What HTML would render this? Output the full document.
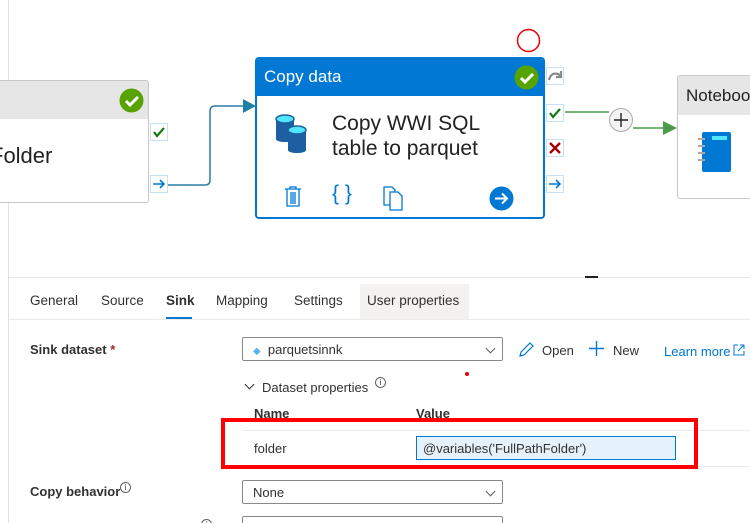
<!DOCTYPE html>
<html><head><style>
*{margin:0;padding:0;box-sizing:border-box}
html,body{width:750px;height:523px;overflow:hidden}
body{background:#fff;font-family:"Liberation Sans",sans-serif;position:relative;color:#323130}
.a{position:absolute}
.sb{position:absolute;width:18px;height:18px;border:1px solid #c7e0f4;background:#fff}
.dd{position:absolute;border:1px solid #8a8886;border-radius:2px;height:24px;font-size:13px;padding:4px 0 0 10px}
.chev{position:absolute;right:8px;top:7px;width:7px;height:7px;border-right:1px solid #605e5c;border-bottom:1px solid #605e5c;transform:rotate(45deg)}
.lbl{position:absolute;font-size:13px;color:#323130;white-space:nowrap}
.info{position:absolute;width:11px;height:11px;border:1px solid #605e5c;border-radius:50%;font-size:8px;text-align:center;line-height:9px}
</style></head><body>
<div class="a" style="left:8px;top:0;width:1px;height:523px;background:#e1e1e1"></div>
<div class="a" style="left:9px;top:277px;width:741px;height:1px;background:#e8e8e8"></div>
<div class="a" style="left:585px;top:276px;width:13px;height:2px;background:#222"></div>

<div class="a" style="left:0;top:80px;width:149px;height:123px;border:1px solid #c8c8c8;border-left:none;border-radius:0 3px 3px 0;background:#fff;overflow:hidden">
 <div style="height:38px;background:#e6e6e6"></div>
 <div class="a" style="left:-10px;top:62px;font-size:22px;color:#222">Folder</div>
</div>
<svg class="a" style="left:119px;top:88px" width="25" height="25"><circle cx="12.5" cy="12.5" r="12" fill="#57a300"/><path d="M7 13l4 4 8-8" stroke="#fff" stroke-width="3" fill="none"/></svg>
<div class="sb" style="left:150px;top:123px"><svg width="16" height="16"><path d="M3 8l3 4 7-8" stroke="#107c10" stroke-width="2.2" fill="none"/></svg></div>
<div class="sb" style="left:150px;top:175px"><svg width="16" height="16"><path d="M2 8h11M9 4l4 4-4 4" stroke="#0078d4" stroke-width="1.6" fill="none"/></svg></div>
<svg class="a" style="left:168px;top:95px" width="90" height="100"><path d="M0 90H37q5 0 5-5V16q0-5 5-5H78" stroke="#2a7ea6" stroke-width="1.5" fill="none"/><path d="M75 4l13 7-13 7z" fill="#1f7fa5"/></svg>

<div class="a" style="left:255px;top:57px;width:290px;height:162px;border:2px solid #0078d4;border-radius:4px;background:#fff;overflow:hidden">
 <div style="height:37px;background:#0078d4;color:#fff;font-size:17px;padding:8px 0 0 7px">Copy data</div>
 <div class="a" style="left:75px;top:52px;font-size:21px;color:#222;line-height:25px">Copy WWI SQL<br>table to parquet</div>
</div>
<svg class="a" style="left:514px;top:65px" width="25" height="25"><circle cx="12.5" cy="12.5" r="12" fill="#57a300"/><path d="M7 13l4 4 8-8" stroke="#fff" stroke-width="3" fill="none"/></svg>
<svg class="a" style="left:275px;top:113px" width="40" height="44"><path d="M1 6v20c0 4 18 4 18 0V6z" fill="#1d5fa0"/><ellipse cx="10" cy="6" rx="9" ry="4" fill="#50e6ff" stroke="#1d5fa0" stroke-width="1.5"/><path d="M13 17v20c0 4 18 4 18 0V17z" fill="#1d5fa0"/><ellipse cx="22" cy="17" rx="9" ry="4" fill="#50e6ff" stroke="#1d5fa0" stroke-width="1.5"/></svg>
<svg class="a" style="left:283px;top:185px" width="20" height="24"><path d="M2 4h16M7 4V2h6v2M4 4v17h12V4M8 7v12M10 7v12M12 7v12" stroke="#0078d4" stroke-width="1.3" fill="none"/></svg>
<div class="a" style="left:332px;top:182px;font-size:21px;color:#0078d4">{ }</div>
<svg class="a" style="left:383px;top:185px" width="24" height="26"><path d="M1 2h8l3 3v15H1z" stroke="#0078d4" stroke-width="1.3" fill="#fff"/><path d="M7 7h8l4 4v14H7z" stroke="#0078d4" stroke-width="1.3" fill="#fff"/></svg>
<svg class="a" style="left:489px;top:186px" width="25" height="25"><circle cx="12.5" cy="12.5" r="12" fill="#0078d4"/><path d="M6 12.5h12M13 7.5l5 5-5 5" stroke="#fff" stroke-width="2" fill="none"/></svg>
<svg class="a" style="left:516px;top:28px" width="25" height="25"><circle cx="12.5" cy="12.5" r="11" stroke="#e00" stroke-width="1.5" fill="none"/></svg>
<div class="sb" style="left:546px;top:67px"><svg width="16" height="16"><path d="M2 12q2-8 9-6l3 2M14 3v6H9" stroke="#888" stroke-width="2.2" fill="none"/></svg></div>
<div class="sb" style="left:546px;top:104px"><svg width="16" height="16"><path d="M3 8l3 4 7-8" stroke="#107c10" stroke-width="2.2" fill="none"/></svg></div>
<div class="sb" style="left:546px;top:139px"><svg width="16" height="16"><path d="M3 3l10 10M13 3L3 13" stroke="#a80000" stroke-width="2.4" fill="none"/></svg></div>
<div class="sb" style="left:546px;top:175px"><svg width="16" height="16"><path d="M2 8h11M9 4l4 4-4 4" stroke="#0078d4" stroke-width="1.6" fill="none"/></svg></div>
<svg class="a" style="left:564px;top:100px" width="115" height="40"><path d="M1 12H45M69 28H100" stroke="#4a9a4a" stroke-width="1.5"/><path d="M99 21l14 7-14 7z" fill="#4a9a4a"/><circle cx="57" cy="20" r="11.5" fill="#f3f3f3" stroke="#aaa"/><path d="M50 20h14M57 13v14" stroke="#222" stroke-width="1.4"/></svg>

<div class="a" style="left:677px;top:75px;width:80px;height:124px;border:1px solid #c8c8c8;border-radius:3px;background:#fff;overflow:hidden">
 <div style="height:39px;background:#e6e6e6;font-size:17px;color:#222;padding:10px 0 0 8px;white-space:nowrap">Notebook</div>
</div>
<svg class="a" style="left:697px;top:131px" width="40" height="44"><rect x="5" y="1" width="29" height="40" rx="2" fill="#0078d4"/><rect x="15" y="5" width="15" height="4" fill="#50e6ff"/><path d="M1 8h7M1 15h7M1 22h7M1 29h7" stroke="#aaa" stroke-width="2"/></svg>

<div class="a" style="left:360px;top:284px;width:109px;height:35px;background:#f3f2f1"></div>
<div class="a" style="left:9px;top:319px;width:741px;height:1px;background:#edebe9"></div>
<div class="a" style="top:293px;left:30px;font-size:13.5px;color:#323130;white-space:nowrap">General</div>
<div class="a" style="top:293px;left:101px;font-size:13.5px">Source</div>
<div class="a" style="top:293px;left:166px;font-size:13.5px;font-weight:bold">Sink</div>
<div class="a" style="left:166px;top:317px;width:26px;height:2px;background:#0078d4"></div>
<div class="a" style="top:293px;left:216px;font-size:13.5px">Mapping</div>
<div class="a" style="top:293px;left:294px;font-size:13.5px">Settings</div>
<div class="a" style="top:293px;left:367px;font-size:13.5px">User properties</div>

<div class="lbl" style="left:30px;top:342px;font-weight:bold">Sink dataset <span style="color:#a4262c">*</span></div>
<div class="dd" style="left:242px;top:337px;width:261px"><span style="color:#5ab4f0;font-size:10px">◆</span>&nbsp; parquetsinnk<div class="chev"></div></div>
<svg class="a" style="left:518px;top:341px" width="17" height="17"><path d="M2 15l1-4 9-9 3 3-9 9z" stroke="#0078d4" stroke-width="1.2" fill="none"/></svg>
<div class="lbl" style="left:542px;top:343px">Open</div>
<svg class="a" style="left:588px;top:340px" width="17" height="17"><path d="M1 8.5h15M8.5 1v15" stroke="#0078d4" stroke-width="1.4"/></svg>
<div class="lbl" style="left:613px;top:343px">New</div>
<div class="lbl" style="left:664px;top:344px;color:#0078d4">Learn more</div>
<svg class="a" style="left:733px;top:344px" width="12" height="12"><path d="M5 1H1v10h10V7M7 1h4v4M11 1L5 7" stroke="#0078d4" fill="none"/></svg>
<div class="a" style="left:465px;top:372px;width:4px;height:4px;border-radius:50%;background:#e00"></div>
<div class="a" style="left:246px;top:381px;width:7px;height:7px;border-right:1px solid #323130;border-bottom:1px solid #323130;transform:rotate(45deg)"></div>
<div class="lbl" style="left:262px;top:380px">Dataset properties</div>
<div class="info" style="left:375px;top:377px">i</div>
<div class="lbl" style="left:254px;top:406px;font-weight:bold">Name</div>
<div class="lbl" style="left:416px;top:406px;font-weight:bold">Value</div>
<div class="a" style="left:242px;top:430px;width:508px;height:1px;background:#edebe9"></div>
<div class="a" style="left:242px;top:466px;width:508px;height:1px;background:#edebe9"></div>
<div class="lbl" style="left:254px;top:441px">folder</div>
<div class="a" style="left:416px;top:436px;width:260px;height:24px;background:#e6f2fb;border:1px solid #0078d4;font-size:13px;padding:4px 0 0 6px">@variables('FullPathFolder')</div>
<div class="a" style="left:221px;top:418px;width:477px;height:51px;border:4px solid #f00"></div>

<div class="lbl" style="left:30px;top:484px;font-weight:bold">Copy behavior</div>
<div class="info" style="left:120px;top:482px">i</div>
<div class="dd" style="left:242px;top:480px;width:261px">None<div class="chev"></div></div>
<div class="dd" style="left:242px;top:516px;width:261px"></div>
<div class="info" style="left:201px;top:519px">i</div>
</body></html>
